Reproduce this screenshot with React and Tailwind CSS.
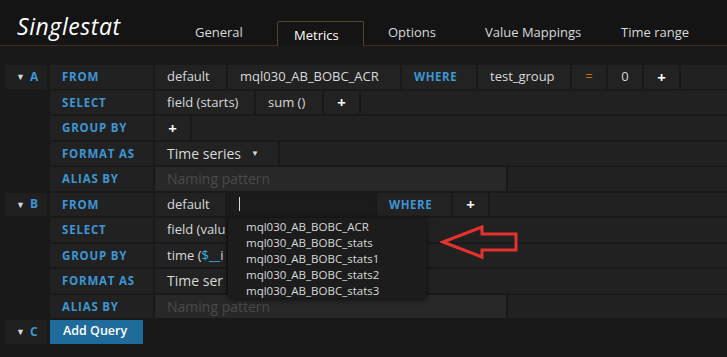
import React from 'react';

const FONT = { fontFamily: '"Open Sans", "Liberation Sans", sans-serif' };

const Cell = ({ children, className = '', color = 'text-[#d8d9da]', bg = 'bg-[#222222]', size = 'text-[13px]' }) => (
  <div className={`flex items-center h-full px-3 whitespace-nowrap overflow-hidden ${size} ${bg} ${color} ${className}`}>
    {children}
  </div>
);

const Label = ({ children }) => (
  <div className="flex items-center h-full w-[103px] bg-[#212121] pl-3 text-[11.5px] font-bold tracking-[0.07em] text-[#3d96d4]">
    {children}
  </div>
);

const Plus = () => (
  <Cell className="w-[35px] justify-center px-0 font-bold" size="text-[15px]" color="text-white">+</Cell>
);

const Filler = () => <div className="flex-1 h-full bg-[#212121]" />;

const Row = ({ gutter, label, children }) => (
  <div className="flex h-[23.5px] gap-[2px]">
    <div className="w-[42px] ml-[5px] mr-[1px] h-full">
      {gutter && (
        <div className="flex items-center h-full bg-[#1f1f1f] pl-[11px] text-[12px] font-bold text-[#3d96d4]">
          <span className="text-[9px] mr-[5px] text-[#d8d9da]">▼</span>
          {gutter}
        </div>
      )}
    </div>
    {label && <Label>{label}</Label>}
    {children}
  </div>
);

const TABLES = ['mql030_AB_BOBC_ACR', 'mql030_AB_BOBC_stats', 'mql030_AB_BOBC_stats1', 'mql030_AB_BOBC_stats2', 'mql030_AB_BOBC_stats3'];

export default function App() {
  return (
    <div className="relative w-[727px] h-[357px] overflow-hidden bg-[#191919]" style={FONT}>
      {/* header */}
      <div className="flex items-end h-[46px] bg-[#141414] border-b border-[#3b2d1a]">
        <div className="w-[180px] pl-[17px] pb-[3px] text-[23px] leading-[32px] italic text-white tracking-wide">Singlestat</div>
        <div className="flex items-end text-[13px] text-[#d8d9da]">
          <div className="w-[97px] pb-[3px] pl-[15px]">General</div>
          <div className="w-[87px] h-[25px] -mb-px pl-[16px] pt-[4px] border border-b-0 border-[#5a4424] rounded-t-[2px] bg-[#151515] text-white">Metrics</div>
          <div className="w-[97px] pb-[3px] pl-[24px]">Options</div>
          <div className="w-[156px] pb-[3px] pl-[24px]">Value Mappings</div>
          <div className="pb-[3px] pl-[4px] whitespace-nowrap">Time range</div>
        </div>
      </div>

      <div className="relative flex flex-col gap-[2px] pt-[19px]">
        {/* query A */}
        <Row gutter="A" label="FROM">
          <Cell className="w-[71px]">default</Cell>
          <Cell className="w-[172px]">mql030_AB_BOBC_ACR</Cell>
          <Cell className="w-[74px] font-bold tracking-[0.05em]" size="text-[11.5px]" color="text-[#3d96d4]">WHERE</Cell>
          <Cell className="w-[92px]">test_group</Cell>
          <Cell className="w-[34px] justify-center px-0" color="text-[#c66a1d]">=</Cell>
          <Cell className="w-[34px] justify-center px-0">0</Cell>
          <Plus />
          <Filler />
        </Row>
        <Row label="SELECT">
          <Cell className="w-[99px]">field (starts)</Cell>
          <Cell className="w-[66px]">sum ()</Cell>
          <Plus />
          <Filler />
        </Row>
        <Row label="GROUP BY">
          <Plus />
          <Filler />
        </Row>
        <Row label="FORMAT AS">
          <Cell className="w-[123px]" size="text-[14px]">
            Time series <span className="ml-[10px] text-[8px]">▼</span>
          </Cell>
          <Filler />
        </Row>
        <Row label="ALIAS BY">
          <Cell className="w-[351px]" size="text-[14px]" bg="bg-[#282828]" color="text-[#4a4a4a]">Naming pattern</Cell>
          <Filler />
        </Row>

        {/* query B */}
        <Row gutter="B" label="FROM">
          <Cell className="w-[70px]">default</Cell>
          <div className="relative w-[148px] h-full">
            <div className="flex items-center h-full bg-[#1b1b1b] pl-[12px]">
              <div className="w-px h-[14px] bg-[#d8d9da]" />
            </div>
            <div className="absolute left-[1px] top-[25px] z-10 w-[198px] h-[80px] bg-[#1c1c1c] pt-[1px] shadow-[0_2px_6px_rgba(0,0,0,0.6)]">
              {TABLES.map((t) => (
                <div key={t} className="h-[16px] pl-[18px] text-[11.5px] leading-[16px] text-[#d8d9da]">{t}</div>
              ))}
            </div>
          </div>
          <Cell className="w-[74px] font-bold tracking-[0.05em]" size="text-[11.5px]" color="text-[#3d96d4]">WHERE</Cell>
          <Plus />
          <Filler />
        </Row>
        <Row label="SELECT">
          <Cell className="w-[71px] pr-0">field (valu</Cell>
          <Filler />
        </Row>
        <Row label="GROUP BY">
          <Cell className="w-[71px] pr-0">
            time (<span className="text-[#33b5e5]">$__</span>i
          </Cell>
          <Filler />
        </Row>
        <Row label="FORMAT AS">
          <Cell className="w-[71px] pr-0" size="text-[14px]">Time ser</Cell>
          <Filler />
        </Row>
        <Row label="ALIAS BY">
          <Cell className="w-[351px]" size="text-[14px]" bg="bg-[#282828]" color="text-[#4a4a4a]">Naming pattern</Cell>
          <Filler />
        </Row>

        {/* query C */}
        <Row gutter="C">
          <div className="flex items-center h-full w-[93px] bg-[#1f6b9c] pl-[13px] text-[12.5px] font-semibold text-white">Add Query</div>
        </Row>

        {/* annotation arrow */}
        <svg className="absolute left-[440px] top-[178px]" width="82" height="36" viewBox="0 0 82 36">
          <path
            d="M3 18 L42 3 L42 10 L76 10 L76 26 L42 26 L42 33 Z"
            fill="none"
            stroke="#e5312f"
            strokeWidth="3"
            strokeLinejoin="miter"
          />
        </svg>
      </div>
    </div>
  );
}
